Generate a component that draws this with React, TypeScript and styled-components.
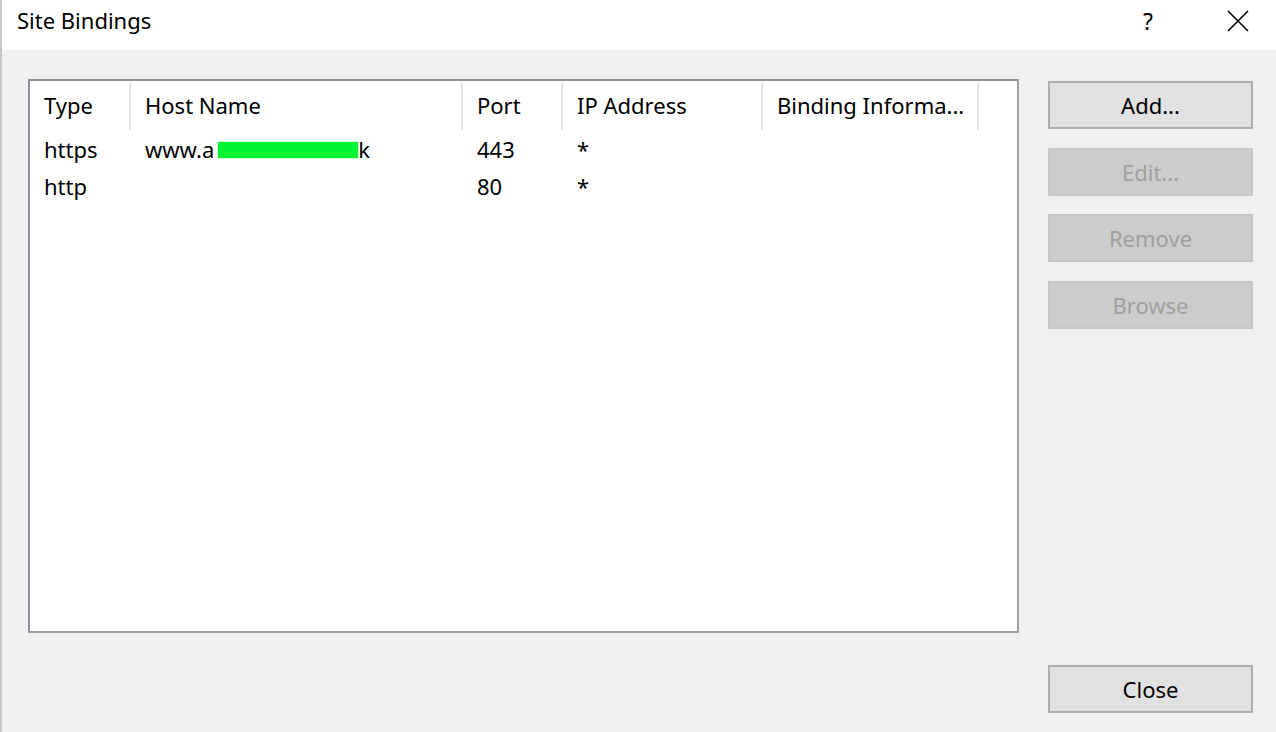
import React from "react";
import styled, { createGlobalStyle } from "styled-components";

const Global = createGlobalStyle`
  html, body { margin: 0; padding: 0; background: #f0f0f0; }
  body { font-family: "Noto Sans", "Open Sans", sans-serif; color: #000; }
`;

const Window = styled.div`
  width: 1276px;
  height: 732px;
  box-sizing: border-box;
  border-left: 2px solid #c8c8c8;
  display: flex;
  flex-direction: column;
  background: #f0f0f0;
  overflow: hidden;
`;

const TitleBar = styled.div`
  height: 50px;
  background: #fff;
  display: flex;
  align-items: center;
  padding-left: 15px;
  flex-shrink: 0;
`;

const Title = styled.div`
  font-size: 22px;
  flex: 1;
  margin-top: -10px;
`;

const TitleButton = styled.div<{ $w: number }>`
  width: ${(p) => p.$w}px;
  height: 40px;
  display: flex;
  align-items: center;
  justify-content: center;
  margin-top: -8px;
  font-size: 23px;
`;

const Body = styled.div`
  flex: 1;
  display: flex;
  padding: 29px 23px 19px 26px;
  gap: 29px;
`;

const ListBox = styled.div`
  width: 991px;
  height: 554px;
  box-sizing: border-box;
  background: #fff;
  border: 2px solid #8d9098;
  border-right-color: #9da0a6;
  border-bottom-color: #9da0a6;
`;

const Table = styled.div`
  display: grid;
  grid-template-columns: 101px 332px 100px 200px 216px;
  font-size: 22px;
`;

const HeadCell = styled.div`
  height: 48px;
  display: flex;
  align-items: center;
  padding-left: 14px;
  border-right: 2px solid #e5e5e5;
  box-sizing: border-box;
  margin-top: 1px;
  white-space: nowrap;
  padding-bottom: 2px;
`;

const Cell = styled.div`
  height: 37px;
  display: flex;
  align-items: center;
  padding-left: 14px;
  white-space: nowrap;
`;

const Redact = styled.span`
  display: inline-block;
  width: 140px;
  height: 16px;
  background: #00f536;
  margin: 0 0 0 4px;
  box-shadow: 0 0 1px #00f536;
  transform: translateY(1px);
`;

const Side = styled.div`
  width: 205px;
  display: flex;
  flex-direction: column;
  padding-top: 2px;
`;

const Button = styled.div<{ $disabled?: boolean }>`
  height: 48px;
  flex-shrink: 0;
  box-sizing: border-box;
  border: 2px solid ${(p) => (p.$disabled ? "#c6c6c6" : "#adadad")};
  background: ${(p) => (p.$disabled ? "#cccccc" : "#e1e1e1")};
  color: ${(p) => (p.$disabled ? "#a0a0a0" : "#000")};
  display: flex;
  align-items: center;
  justify-content: center;
  font-size: 22px;
  margin-bottom: 18.7px;
  &:last-child { margin-bottom: 0; }
`;

const Spacer = styled.div`
  flex: 1;
`;

export default function App() {
  return (
    <>
      <Global />
      <Window>
        <TitleBar>
          <Title>Site Bindings</Title>
          <TitleButton $w={104}>?</TitleButton>
          <TitleButton $w={76}>
            <svg width="24" height="24" viewBox="0 0 24 24">
              <path d="M2 2 L22 22 M22 2 L2 22" stroke="#000" strokeWidth="1.6" />
            </svg>
          </TitleButton>
        </TitleBar>
        <Body>
          <ListBox>
            <Table>
              <HeadCell>Type</HeadCell>
              <HeadCell>Host Name</HeadCell>
              <HeadCell>Port</HeadCell>
              <HeadCell>IP Address</HeadCell>
              <HeadCell>Binding Informa...</HeadCell>
              <Cell>https</Cell>
              <Cell>
                www.a<Redact />k
              </Cell>
              <Cell>443</Cell>
              <Cell>*</Cell>
              <Cell></Cell>
              <Cell>http</Cell>
              <Cell></Cell>
              <Cell>80</Cell>
              <Cell>*</Cell>
              <Cell></Cell>
            </Table>
          </ListBox>
          <Side>
            <Button>Add...</Button>
            <Button $disabled>Edit...</Button>
            <Button $disabled>Remove</Button>
            <Button $disabled>Browse</Button>
            <Spacer />
            <Button>Close</Button>
          </Side>
        </Body>
      </Window>
    </>
  );
}
